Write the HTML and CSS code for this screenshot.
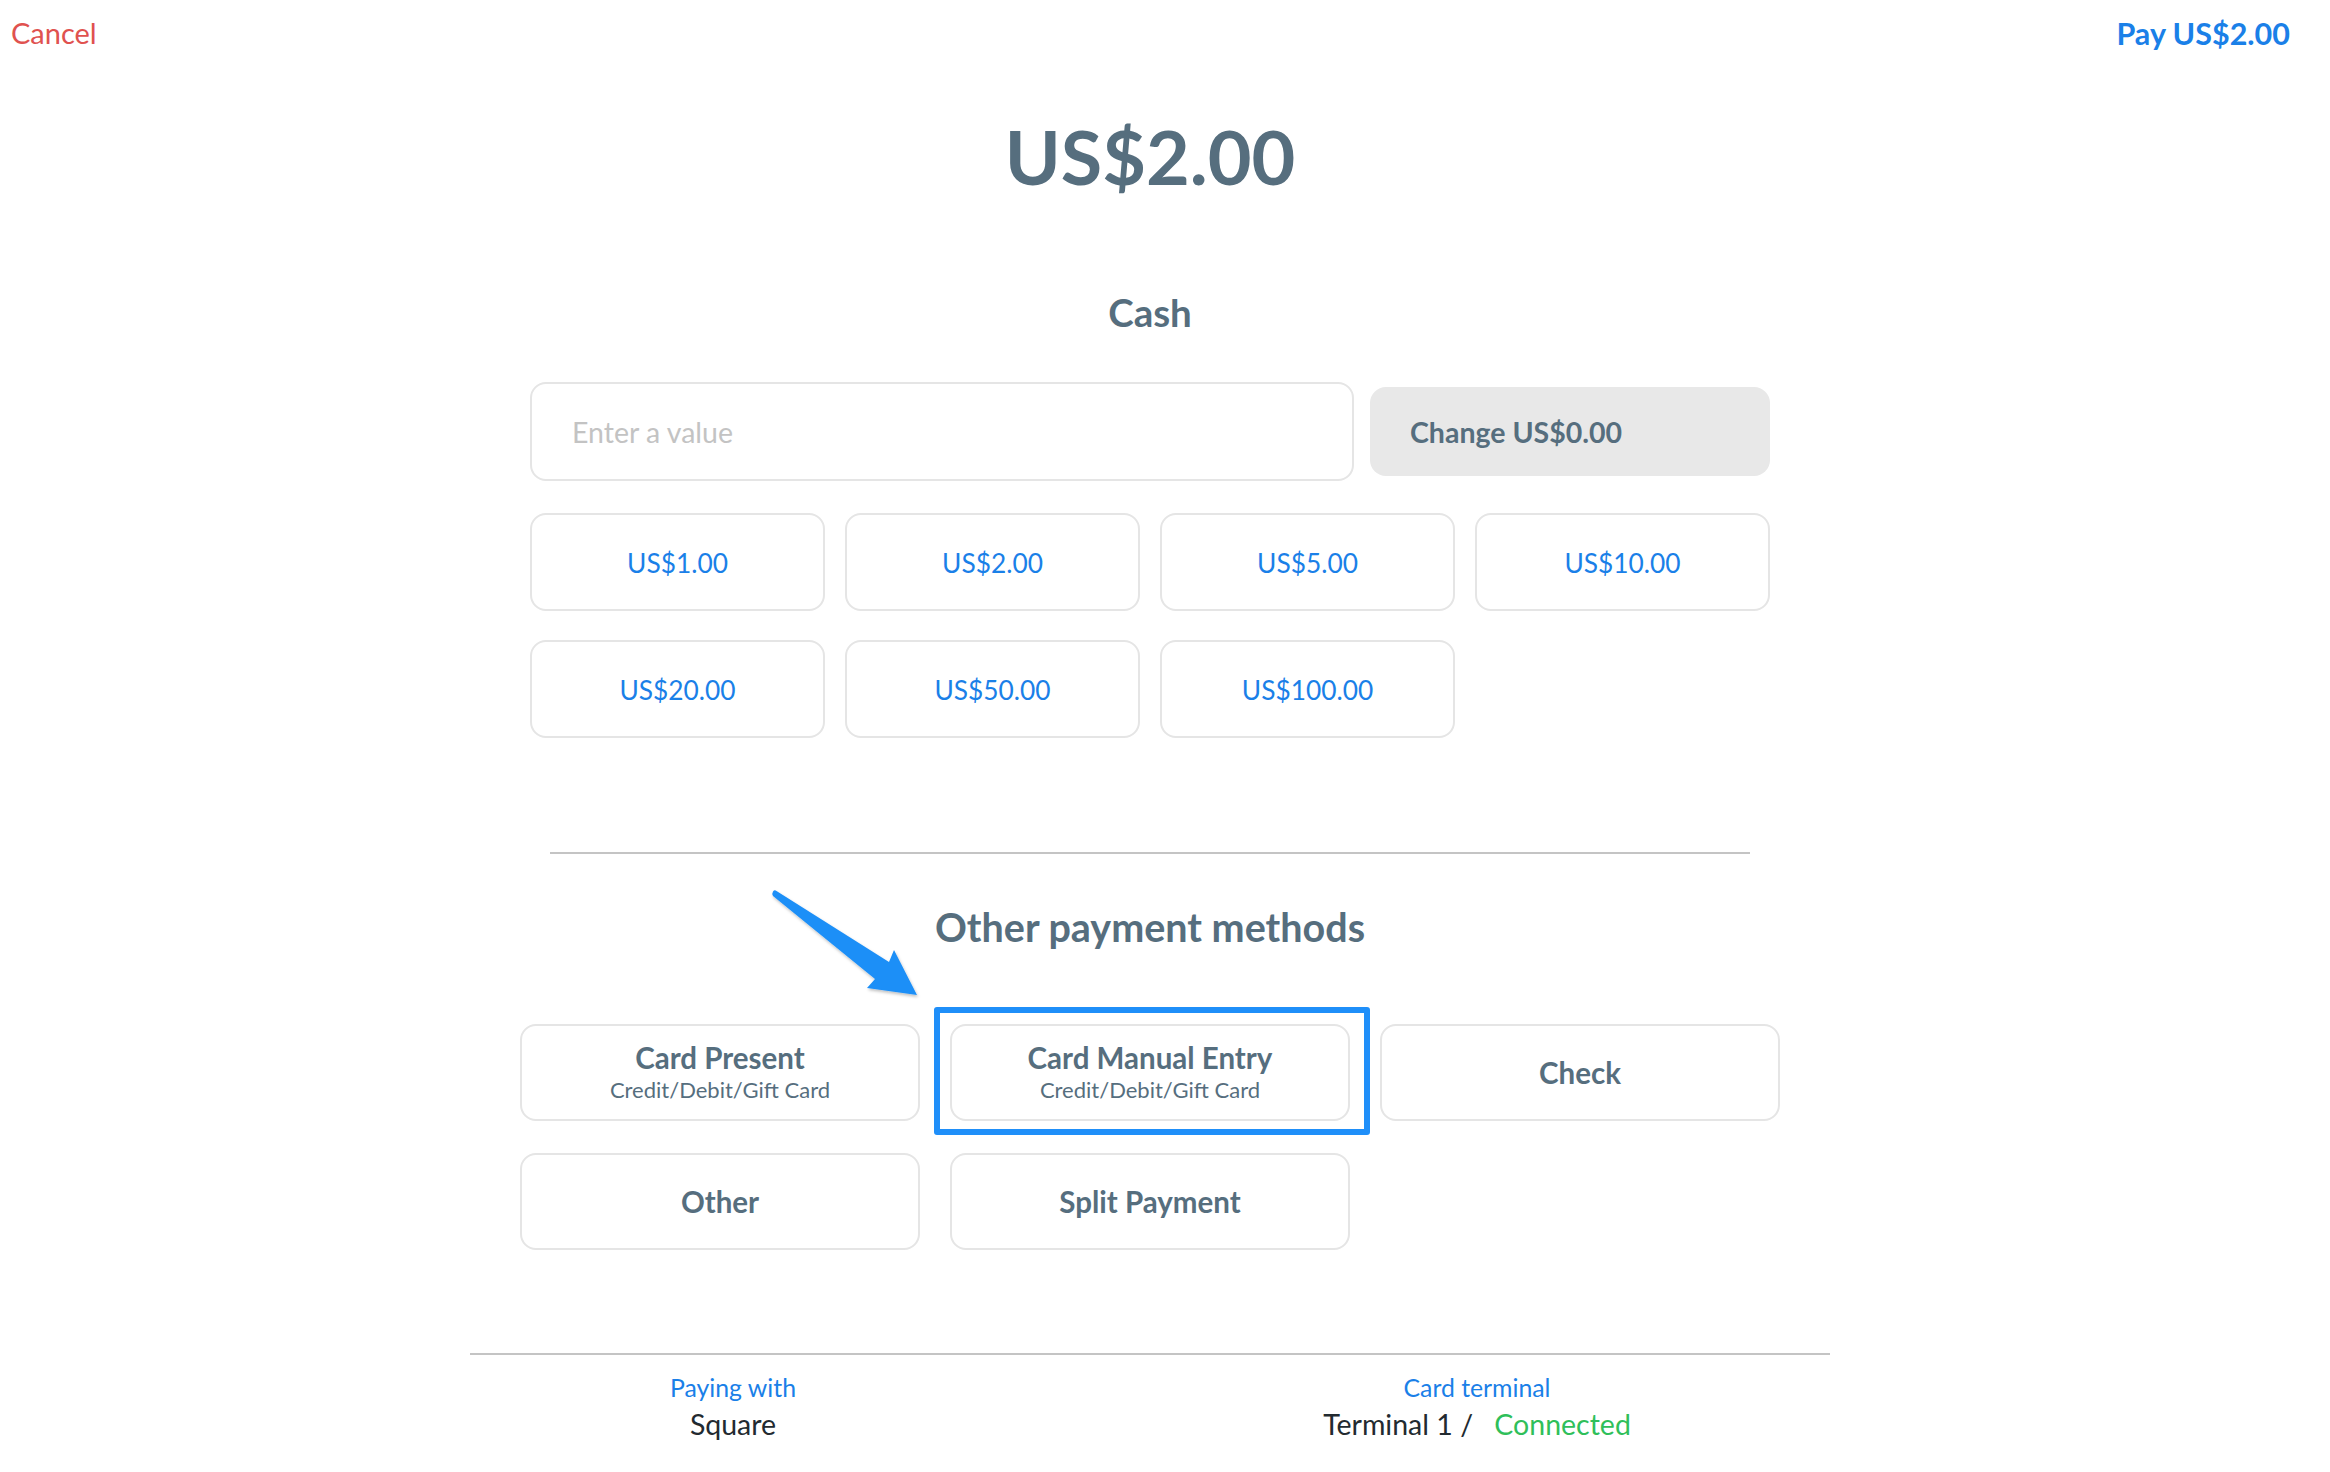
FILE: index.html
```html
<!DOCTYPE html>
<html lang="en">
<head>
<meta charset="utf-8">
<title>Payment</title>
<link rel="stylesheet" href="styles.css">
</head>
<body>
<div class="page">
  <header class="topbar">
    <a class="cancel">Cancel</a>
    <a class="pay">Pay US$2.00</a>
  </header>

  <h1 class="total">US$2.00</h1>

  <section class="cash">
    <h2 class="section-title">Cash</h2>
    <div class="cash-row">
      <div class="cash-input">Enter a value</div>
      <div class="change">Change US$0.00</div>
    </div>
    <div class="quick-grid">
      <button class="quick">US$1.00</button>
      <button class="quick">US$2.00</button>
      <button class="quick">US$5.00</button>
      <button class="quick">US$10.00</button>
      <button class="quick">US$20.00</button>
      <button class="quick">US$50.00</button>
      <button class="quick">US$100.00</button>
    </div>
  </section>

  <hr class="divider">

  <section class="other">
    <h2 class="section-title other-title">Other payment methods</h2>
    <div class="method-grid">
      <button class="method"><span class="m-title">Card Present</span><span class="m-sub">Credit/Debit/Gift Card</span></button>
      <button class="method highlighted"><span class="m-title">Card Manual Entry</span><span class="m-sub">Credit/Debit/Gift Card</span>
        <span class="highlight-box"></span>
        <svg class="arrow" width="180" height="130" viewBox="0 0 180 130">
          <defs>
            <filter id="sh" x="-20%" y="-20%" width="140%" height="140%">
              <feDropShadow dx="1" dy="2" stdDeviation="1.5" flood-color="#000" flood-opacity="0.25"/>
            </filter>
          </defs>
          <path filter="url(#sh)" fill="#1e8ff7" d="M11 9.5 Q12.5 7.5 14.5 9 L127 80 L132 68 L155 113 L105 106 L113 97 L11 14 Q9.5 12 11 9.5 Z"/>
        </svg>
      </button>
      <button class="method"><span class="m-title">Check</span></button>
      <button class="method"><span class="m-title">Other</span></button>
      <button class="method"><span class="m-title">Split Payment</span></button>
    </div>
  </section>

  <footer class="footer">
    <div class="footer-info">
      <div class="info info-left">
        <div class="info-label">Paying with</div>
        <div class="info-value">Square</div>
      </div>
      <div class="info info-right">
        <div class="info-label">Card terminal</div>
        <div class="info-value">Terminal 1 / <span class="connected">Connected</span></div>
      </div>
    </div>
  </footer>
</div>
</body>
</html>
```

FILE: styles.css
```css
* { box-sizing: border-box; }

html, body {
  margin: 0;
  padding: 0;
  background: #ffffff;
}

body {
  font-family: "Lato", "Open Sans", "Liberation Sans", sans-serif;
  color: #566e7e;
}

.page {
  width: 2300px;
}

.topbar {
  display: flex;
  justify-content: space-between;
  align-items: center;
  padding: 15px 10px 0 11px;
  height: 51px;
}

.cancel {
  color: #e0524f;
  font-size: 29px;
  line-height: 36px;
}

.pay {
  color: #1a80e8;
  font-size: 30.5px;
  font-weight: 700;
  line-height: 36px;
}

.total {
  margin: 58px 0 0;
  text-align: center;
  font-size: 75.5px;
  line-height: 94px;
  font-weight: 700;
  color: #566e7e;
}

.cash {
  width: 1240px;
  margin: 0 auto;
}

.section-title {
  margin: 86px 0 0;
  text-align: center;
  font-size: 38.5px;
  line-height: 46px;
  font-weight: 700;
  color: #566e7e;
}

.cash-row {
  display: flex;
  align-items: center;
  gap: 16px;
  margin-top: 47px;
}

.cash-input {
  width: 824px;
  height: 99px;
  border: 2px solid #e5e5e5;
  border-radius: 16px;
  padding-left: 40px;
  display: flex;
  align-items: center;
  font-size: 28.5px;
  color: #c3c3c3;
}

.change {
  width: 400px;
  height: 89px;
  background: #e8e8e8;
  border-radius: 16px;
  padding-left: 40px;
  display: flex;
  align-items: center;
  font-size: 28.5px;
  font-weight: 700;
  color: #566e7e;
}

.quick-grid {
  display: grid;
  grid-template-columns: repeat(4, 295px);
  column-gap: 20px;
  row-gap: 29px;
  margin-top: 32px;
}

.quick {
  height: 98px;
  background: #fff;
  border: 2px solid #e5e5e5;
  border-radius: 16px;
  font-family: inherit;
  font-size: 26.3px;
  color: #1a80e8;
  padding: 2px 0 0;
}

.divider {
  width: 1200px;
  margin: 114px auto 0;
  border: 0;
  border-top: 2px solid #c4c4c4;
  height: 0;
}

.other {
  width: 1260px;
  margin: 0 auto;
}

.other-title {
  margin-top: 50px;
  font-size: 39.5px;
}

.method-grid {
  display: grid;
  grid-template-columns: repeat(3, 400px);
  column-gap: 30px;
  row-gap: 32px;
  margin-top: 74px;
}

.method {
  position: relative;
  height: 97px;
  background: #fff;
  border: 2px solid #e5e5e5;
  border-radius: 16px;
  font-family: inherit;
  color: #566e7e;
  padding: 0;
  display: flex;
  flex-direction: column;
  align-items: center;
  justify-content: center;
}

.m-title {
  font-size: 29.5px;
  font-weight: 700;
  line-height: 34px;
}

.m-sub {
  font-size: 22px;
  line-height: 30px;
}

.highlight-box {
  position: absolute;
  left: -18px;
  top: -19px;
  right: -22px;
  bottom: -16px;
  border: 6px solid #1f8ff9;
  border-radius: 3px;
  pointer-events: none;
}

.arrow {
  position: absolute;
  left: -190px;
  top: -144px;
  overflow: visible;
}

.footer {
  width: 1360px;
  margin: 103px auto 0;
  border-top: 2px solid #c4c4c4;
}

.footer-info {
  display: flex;
  padding-top: 18px;
}

.info {
  text-align: center;
}

.info-left {
  width: 526px;
}

.info-right {
  width: 482px;
  margin-left: 240px;
}

.info-label {
  font-size: 24.8px;
  line-height: 30px;
  color: #1a80e8;
}

.info-value {
  margin-top: 4px;
  font-size: 28.5px;
  line-height: 34px;
  color: #222a30;
}

.connected {
  color: #2fbf5a;
  margin-left: 14px;
}
```
